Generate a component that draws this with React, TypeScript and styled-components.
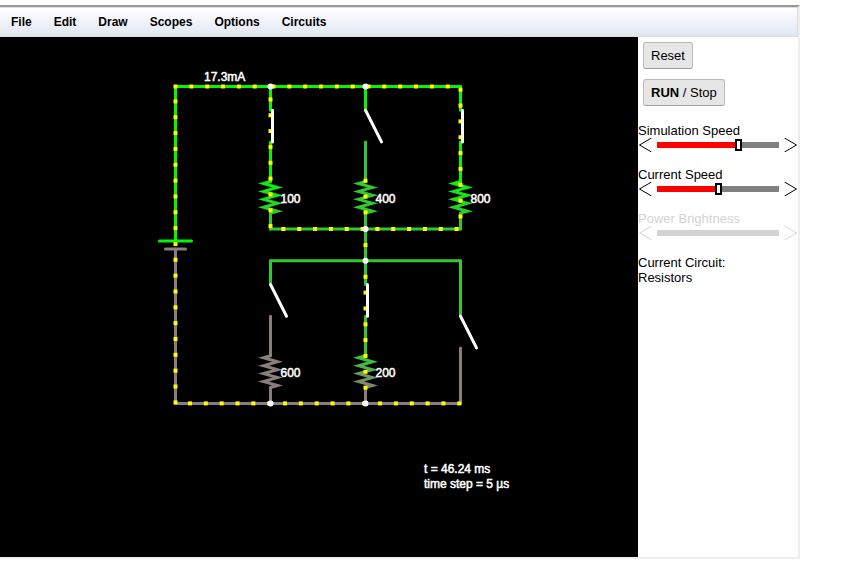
import React, { useState } from "react";
import styled, { createGlobalStyle } from "styled-components";

const GlobalStyle = createGlobalStyle`
  * { box-sizing: border-box; }
  body {
    margin: 0;
    background: #fff;
    color: #000;
    font-family: "Liberation Sans", Arial, sans-serif;
    font-size: 13px;
    line-height: 15px;
  }
`;

const Frame = styled.div`
  display: flex;
  flex-direction: column;
  height: calc(100vh - 20px);
  margin: 5px 43px 0 0;
  overflow: hidden;
  border-top: 2px solid #999;
  border-right: 2px solid #eee;
  border-bottom: 2px solid #eee;
`;

const MenuBar = styled.nav`
  display: flex;
  gap: 22px;
  flex: none;
  height: 30px;
  padding: 0 11px;
  border: 1px solid #ddd;
  border-left: 0;
  background: linear-gradient(#fff, #e0e6f2);
`;

const MenuItem = styled.button`
  padding: 0;
  border: 0;
  background: none;
  font: bold 12px "Liberation Sans", Arial, sans-serif;
  color: #000;
`;

const Workspace = styled.main`
  display: flex;
  flex: 1;
  min-height: 0;
`;

const Board = styled.section`
  flex: 1;
  min-width: 0;
  background: #000;
`;

const Schematic = styled.svg`
  display: block;
  width: 100%;
  height: 100%;
  font: 12px "Liberation Sans", Arial, sans-serif;
`;

const SidePanel = styled.aside`
  flex: none;
  width: 160px;
`;

const Buttons = styled.div`
  display: flex;
  flex-direction: column;
  align-items: flex-start;
  gap: 10px;
  padding: 5px;
  margin-bottom: 12px;
`;

const PushButton = styled.button`
  height: 27px;
  padding: 0 7px;
  border: 1px solid #bbb;
  border-bottom-color: #a0a0a0;
  border-radius: 3px;
  background: #e6e6e6;
  font: 13px "Liberation Sans", Arial, sans-serif;
  color: #000;
`;

const Control = styled.div<{ $off?: boolean }>`
  margin-bottom: 15px;
  color: ${(p) => (p.$off ? "lightgray" : "#000")};
`;

const ControlLabel = styled.label`
  display: block;
`;

const SliderRow = styled.div`
  display: flex;
  align-items: center;
  height: 14px;
`;

const StepButton = styled.button`
  display: flex;
  flex: none;
  width: 19px;
  height: 14px;
  padding: 0;
  border: 0;
  background: none;
  color: inherit;
`;

const Slider = styled.input<{ $percent: number }>`
  flex: 1;
  min-width: 0;
  height: 12px;
  margin: 0;
  appearance: none;
  background: linear-gradient(
      to right,
      red ${(p) => p.$percent}%,
      gray ${(p) => p.$percent}%
    )
    center / 100% 6px no-repeat;

  &::-webkit-slider-thumb {
    appearance: none;
    width: 7px;
    height: 12px;
    border: 2px solid #000;
    background: #fff;
  }

  &:disabled {
    background: linear-gradient(lightgray, lightgray) center / 100% 6px no-repeat;
  }

  &:disabled::-webkit-slider-thumb {
    visibility: hidden;
  }
`;

const CircuitName = styled.p`
  margin: 0;
`;

type SliderControlProps = {
  id: string;
  label: string;
  initial: number;
  disabled?: boolean;
};

function SliderControl({ id, label, initial, disabled }: SliderControlProps) {
  const [value, setValue] = useState(initial);
  const step = (by: number) => setValue((v) => Math.min(100, Math.max(0, v + by)));
  return (
    <Control $off={disabled}>
      <ControlLabel htmlFor={id}>{label}</ControlLabel>
      <SliderRow>
        <StepButton aria-label={`Decrease ${label}`} disabled={disabled} onClick={() => step(-1)}>
          <svg width="19" height="14" fill="none" stroke="currentColor">
            <path d="M13.5 0 L1.5 7 L13.5 14" />
          </svg>
        </StepButton>
        <Slider
          id={id}
          type="range"
          min={0}
          max={100}
          value={value}
          $percent={value}
          disabled={disabled}
          onChange={(e) => setValue(Number(e.target.value))}
        />
        <StepButton aria-label={`Increase ${label}`} disabled={disabled} onClick={() => step(1)}>
          <svg width="19" height="14" fill="none" stroke="currentColor">
            <path d="M5.5 0 L17.5 7 L5.5 14" />
          </svg>
        </StepButton>
      </SliderRow>
    </Control>
  );
}

const HIGH = "#05f505";
const MID = "#32c832";
const LOW = "#8c7d7d";
const GRID = 15.84;

const X = [175.5, 270.5, 365.5, 460.5];
const TOP = 49.5;
const JOIN = 192;
const SPLIT = 223.7;
const BOTTOM = 366.4;

type Segment = [string, number, number, number, number];

const wires: Segment[] = [
  [HIGH, X[0], TOP, X[3], TOP],
  [HIGH, X[0], TOP, X[0], 204],
  [LOW, X[0], 212, X[0], BOTTOM],
  [HIGH, X[1], TOP, X[1], 73.3],
  [HIGH, X[1], 104.9, X[1], 144.5],
  [MID, X[1], 176.2, X[1], JOIN],
  [HIGH, X[2], TOP, X[2], 73.3],
  [MID, X[2], 104.9, X[2], 144.5],
  [MID, X[2], 176.2, X[2], SPLIT + 23.8],
  [HIGH, X[3], TOP, X[3], 73.3],
  [HIGH, X[3], 104.9, X[3], 144.5],
  [MID, X[3], 176.2, X[3], JOIN],
  [MID, X[1], JOIN, X[3], JOIN],
  [MID, X[1], SPLIT, X[3], SPLIT],
  [MID, X[1], SPLIT, X[1], 247.5],
  [LOW, X[1], 279.2, X[1], 318.8],
  [LOW, X[1], 350.5, X[1], BOTTOM],
  [MID, X[2], 279.2, X[2], 318.8],
  [LOW, X[2], 350.5, X[2], BOTTOM],
  [MID, X[3], SPLIT, X[3], 279.2],
  [LOW, X[3], 310.9, X[3], BOTTOM],
  [LOW, X[0], BOTTOM, X[3], BOTTOM],
  [HIGH, 159.5, 204, 191.5, 204],
  [LOW, 165.5, 212, 185.5, 212],
];

const switches: [number, number, number, number][] = [
  [X[1] + 2, 73.3, X[1] + 2, 104.9],
  [X[2], 73.3, X[2] + 16, 104.9],
  [X[3] + 2, 73.3, X[3] + 2, 104.9],
  [X[1], 247.5, X[1] + 16, 279.2],
  [X[2] + 2, 247.5, X[2] + 2, 279.2],
  [X[3], 279.2, X[3] + 16, 310.9],
];

const resistors = [
  { x: X[1], y: 144.5, value: "100", from: HIGH, to: MID },
  { x: X[2], y: 144.5, value: "400", from: MID, to: MID },
  { x: X[3], y: 144.5, value: "800", from: HIGH, to: MID },
  { x: X[1], y: 318.8, value: "600", from: LOW, to: LOW },
  { x: X[2], y: 318.8, value: "200", from: MID, to: LOW },
];

const nodes = [
  [X[1], TOP],
  [X[2], TOP],
  [X[2], JOIN],
  [X[2], SPLIT],
  [X[1], BOTTOM],
  [X[2], BOTTOM],
];

type DotRun = { x: number; y: number; count: number; down?: boolean };

const dotRuns: DotRun[] = [
  { x: 175.5, y: TOP, count: 6 },
  { x: 273.5, y: TOP, count: 6 },
  { x: 368.5, y: TOP, count: 6 },
  { x: X[0], y: 64.4, count: 20, down: true },
  { x: 190, y: BOTTOM, count: 18 },
  { x: X[1], y: 62.4, count: 9, down: true },
  { x: X[3], y: 52.7, count: 9, down: true },
  { x: X[2], y: 143.7, count: 3, down: true },
  { x: X[2], y: 208.1, count: 10, down: true },
  { x: 283.4, y: JOIN, count: 6 },
  { x: 377.4, y: JOIN, count: 6 },
];

function zigzag(x: number, y: number) {
  const unit = GRID / 8;
  const points = [`${x},${y}`];
  for (let i = 0; i < 8; i++) {
    points.push(`${x + (i % 2 ? 7 : -7)},${y + unit * (2 * i + 1)}`);
  }
  points.push(`${x},${y + unit * 16}`);
  return points.join(" ");
}

function Circuit() {
  return (
    <Schematic role="img" aria-label="Resistors circuit">
      <defs>
        {resistors.map((r, i) => (
          <linearGradient
            key={i}
            id={`drop${i}`}
            gradientUnits="userSpaceOnUse"
            x1={r.x}
            x2={r.x}
            y1={r.y}
            y2={r.y + 32}
          >
            <stop stopColor={r.from} />
            <stop offset="1" stopColor={r.to} />
          </linearGradient>
        ))}
      </defs>
      <g strokeWidth="3" strokeLinecap="round" fill="none">
        {wires.map(([color, x1, y1, x2, y2], i) => (
          <line key={i} stroke={color} x1={x1} y1={y1} x2={x2} y2={y2} />
        ))}
        {resistors.map((r, i) => (
          <polyline key={i} points={zigzag(r.x, r.y)} stroke={`url(#drop${i})`} strokeMiterlimit="10" />
        ))}
      </g>
      {dotRuns.map((run, r) =>
        Array.from({ length: run.count }, (_, i) => {
          const x = run.x + (run.down ? 0 : i * GRID);
          const y = run.y + (run.down ? i * GRID : 0);
          return <rect key={`${r}-${i}`} x={x - 2} y={y - 2} width="4" height="4" fill="#ff0" />;
        })
      )}
      <g stroke="#fff" strokeWidth="3" strokeLinecap="round">
        {switches.map(([x1, y1, x2, y2], i) => (
          <line key={i} x1={x1} y1={y1} x2={x2} y2={y2} />
        ))}
      </g>
      <g fill="#fff">
        {nodes.map(([x, y], i) => (
          <circle key={i} cx={x} cy={y} r="3" />
        ))}
      </g>
      <g fill="#fff" stroke="#fff" strokeWidth=".5">
        <text x="204" y="44">17.3mA</text>
        {resistors.map((r) => (
          <text key={r.value} x={r.x + 10} y={Math.ceil(r.y + 21)}>
            {r.value}
          </text>
        ))}
        <text x="424" y="436">t = 46.24 ms</text>
        <text x="424" y="451">time step = 5 µs</text>
      </g>
    </Schematic>
  );
}

const menus = ["File", "Edit", "Draw", "Scopes", "Options", "Circuits"];

export default function App() {
  return (
    <>
      <GlobalStyle />
      <Frame>
        <MenuBar>
          {menus.map((name) => (
            <MenuItem key={name}>{name}</MenuItem>
          ))}
        </MenuBar>
        <Workspace>
          <Board>
            <Circuit />
          </Board>
          <SidePanel>
            <Buttons>
              <PushButton>Reset</PushButton>
              <PushButton>
                <strong>RUN</strong> / Stop
              </PushButton>
            </Buttons>
            <SliderControl id="sim-speed" label="Simulation Speed" initial={68} />
            <SliderControl id="current-speed" label="Current Speed" initial={50} />
            <SliderControl id="brightness" label="Power Brightness" initial={50} disabled />
            <CircuitName>
              Current Circuit:
              <br />
              Resistors
            </CircuitName>
          </SidePanel>
        </Workspace>
      </Frame>
    </>
  );
}
